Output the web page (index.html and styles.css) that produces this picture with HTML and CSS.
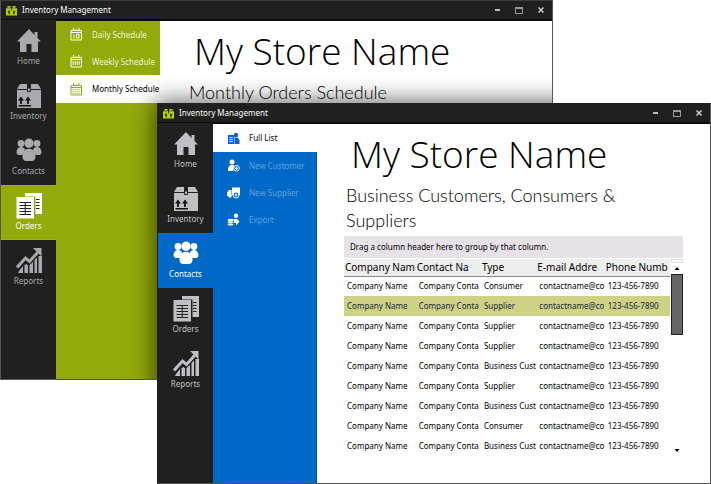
FILE: index.html
```html
<!DOCTYPE html>
<html lang="en">
<head>
<meta charset="utf-8">
<title>Inventory Management</title>
<link rel="stylesheet" href="styles.css">
</head>
<body>
<svg class="defs" aria-hidden="true">
  <symbol id="i-logo" viewBox="0 0 12 12"><path d="M0 3.500h5.500v8H0zM6.500 3.500H12v8H6.500zM5 6h2v5.500H5z" fill="#b4d400"/><path d="M1.500 1H5v2H1.500zM7 1h3.500v2H7z" fill="#b4d400"/><path d="M3.500 6v4M8.500 6v4M2 7.500h1.500M8.500 7.500H10" stroke="#20250a" stroke-width="1.300" fill="none"/></symbol>
  <symbol id="i-home" viewBox="0 0 26 26"><path d="M13 1L1 13.500h3V24h6.500v-8h5v8H22V13.500h3L21.500 10V4H18.500v3z"/></symbol>
  <symbol id="i-inventory" viewBox="0 0 26 26"><path d="M4 1h7v4.500h4V1h7l3 5v19H1V6z"/><path d="M1 6.500h10M15 6.500h10M11.500 1v7.500h3V1" stroke="#222" fill="none"/><path d="M5 15v6M12 15v6" stroke="#111" stroke-width="1.800"/><path d="M2 17.500L5 13.500 8 17.500zM9 17.500l3-4 3 4zM2.500 22h12.500v1.500H2.500z" fill="#111"/></symbol>
  <symbol id="i-contacts" viewBox="0 0 26 26"><circle cx="5" cy="5.500" r="3.400"/><circle cx="21" cy="5.500" r="3.400"/><path d="M.5 15c0-4 2-6 4.500-6 2 0 3.500 1 4 2.500L6.500 17H2zM25.500 15c0-4-2-6-4.500-6-2 0-3.500 1-4 2.500l2.500 5.500H24z"/><path d="M13 10.800c4.500 0 6.500 3.500 6.500 7.700 0 2.500-1 4-3 4.500h-7c-2-.5-3-2-3-4.500 0-4.200 2-7.700 6.500-7.700z"/><circle cx="13" cy="5.300" r="4.700"/></symbol>
  <symbol id="i-orders" viewBox="0 0 26 26"><path d="M9 0h17v21h-6.500V3.500H9z"/><path d="M.5 4H18v21.500H.5z"/><path class="lines" d="M3.500 9.500h11.500M3.500 12.500h11.500M3.500 15.500h11.500M3.500 18.500h11.500M3.500 21.500h11.500M9.200 9v13M20 6.500h3.500M20 9.500h3.500M20 12.500h3.500M20 15.500h3.500" fill="none"/></symbol>
  <symbol id="i-reports" viewBox="0 0 26 26"><path d="M3 23l4-5v7H2zM8.500 17l2-1 1.500 1.500V25H8.500zM13.500 17L17 14v11h-3.500zM18.500 12l2.500-2.500V25h-2.500zM22.500 8H26v17h-3.500z"/><path d="M1 19.500L9.500 10l4 3.500L22 4" fill="none" stroke="currentColor" stroke-width="3"/><path d="M17 0h8.500v8.500z"/></symbol>
  <symbol id="i-cal" viewBox="0 0 13 13"><path d="M1 2.500h10.500V12H1zM1 4.500h10.500M3.500 0v3M9 0v3M6.200 1v1" fill="none" stroke="currentColor"/></symbol>
  <symbol id="i-day" viewBox="0 0 13 13"><use href="#i-cal"/><path d="M4 6.500v4M6.500 6.500h2.500v3.500H6.500z" fill="none" stroke="currentColor"/></symbol>
  <symbol id="i-week" viewBox="0 0 13 13"><use href="#i-cal"/><path d="M2.500 7h8M2.500 9h8" fill="none" stroke="currentColor" stroke-width="1.500" stroke-dasharray="1.300 .8"/></symbol>
  <symbol id="i-month" viewBox="0 0 13 13"><use href="#i-cal"/><path d="M2.500 6.300h8M2.500 8.300h8M2.500 10.300h8" fill="none" stroke="currentColor" stroke-dasharray="1.200 .8"/></symbol>
  <symbol id="i-list" viewBox="0 0 13 13"><path d="M1 3h6.500v9H1z"/><circle cx="9" cy="3" r="2.200"/><path d="M8 5.500h2.500L12.500 8v4H8z"/><path d="M2.300 5.500H6M2.300 7.500H6M2.300 9.500H6" stroke="#fff" stroke-width=".8"/></symbol>
  <symbol id="i-customer" viewBox="0 0 13 13"><circle cx="5" cy="3" r="2.500"/><path d="M1 12c0-4 1-6 4-6 1.500 0 2.500.5 3 1.500L6 12z"/><circle cx="9.500" cy="9.300" r="2.800" fill="#0068c6" stroke="currentColor"/><path d="M9.500 7.800v3M8 9.300h3" stroke="currentColor"/></symbol>
  <symbol id="i-supplier" viewBox="0 0 13 13"><path d="M5 1.500h8V9H5zM0 6.500L2 4h2.500v6H0z"/><circle cx="3" cy="10" r="1.800"/><circle cx="9" cy="9" r="3" fill="#0068c6" stroke="currentColor"/><path d="M9 7.500v3M7.500 9h3" stroke="currentColor"/></symbol>
  <symbol id="i-export" viewBox="0 0 13 13"><circle cx="9" cy="2.800" r="2.200"/><path d="M6.500 6H10l2.500 2.500L9 12.500V10H7z"/><ellipse cx="3.500" cy="7" rx="3" ry="1.200"/><ellipse cx="3.500" cy="9.300" rx="3" ry="1"/><ellipse cx="3.500" cy="11.500" rx="3" ry="1"/></symbol>
</svg>

<section class="window back">
  <header class="titlebar">
    <svg class="logo"><use href="#i-logo"/></svg><span class="caption">Inventory Management</span>
    <button class="ctl min" aria-label="Minimize"></button><button class="ctl max" aria-label="Maximize"></button><button class="ctl close" aria-label="Close"><svg viewBox="0 0 6 6"><path d="M.5.5l5 5M5.500.5l-5 5"/></svg></button>
  </header>
  <div class="body">
    <nav class="nav">
      <a href="#"><svg><use href="#i-home"/></svg>Home</a>
      <a href="#"><svg><use href="#i-inventory"/></svg>Inventory</a>
      <a href="#"><svg><use href="#i-contacts"/></svg>Contacts</a>
      <a href="#" class="on"><svg><use href="#i-orders"/></svg>Orders</a>
      <a href="#"><svg><use href="#i-reports"/></svg>Reports</a>
    </nav>
    <nav class="menu">
      <a href="#"><svg><use href="#i-day"/></svg>Daily Schedule</a>
      <a href="#"><svg><use href="#i-week"/></svg>Weekly Schedule</a>
      <a href="#" class="on"><svg><use href="#i-month"/></svg>Monthly Schedule</a>
    </nav>
    <main class="content">
      <h1>My Store Name</h1>
      <h2>Monthly Orders Schedule</h2>
    </main>
  </div>
</section>

<section class="window front">
  <header class="titlebar">
    <svg class="logo"><use href="#i-logo"/></svg><span class="caption">Inventory Management</span>
    <button class="ctl min" aria-label="Minimize"></button><button class="ctl max" aria-label="Maximize"></button><button class="ctl close" aria-label="Close"><svg viewBox="0 0 6 6"><path d="M.5.5l5 5M5.500.5l-5 5"/></svg></button>
  </header>
  <div class="body">
    <nav class="nav">
      <a href="#"><svg><use href="#i-home"/></svg>Home</a>
      <a href="#"><svg><use href="#i-inventory"/></svg>Inventory</a>
      <a href="#" class="on"><svg><use href="#i-contacts"/></svg>Contacts</a>
      <a href="#"><svg><use href="#i-orders"/></svg>Orders</a>
      <a href="#"><svg><use href="#i-reports"/></svg>Reports</a>
    </nav>
    <nav class="menu">
      <a href="#" class="on"><svg><use href="#i-list"/></svg>Full List</a>
      <a href="#"><svg><use href="#i-customer"/></svg>New Customer</a>
      <a href="#"><svg><use href="#i-supplier"/></svg>New Supplier</a>
      <a href="#"><svg><use href="#i-export"/></svg>Export</a>
    </nav>
    <main class="content">
      <h1>My Store Name</h1>
      <h2>Business Customers, Consumers &amp; Suppliers</h2>
      <p class="groupbar">Drag a column header here to group by that column.</p>
      <div class="grid">
        <table>
          <colgroup><col class="c1"><col class="c2"><col class="c3"><col class="c4"><col class="c5"></colgroup>
          <thead><tr><th>Company Nam</th><th>Contact Na</th><th>Type</th><th>E-mail Addre</th><th>Phone Numb</th></tr></thead>
          <tbody>
            <tr><td>Company Name</td><td>Company Conta</td><td>Consumer</td><td>contactname@co</td><td>123-456-7890</td></tr>
            <tr class="sel"><td>Company Name</td><td>Company Conta</td><td>Supplier</td><td>contactname@co</td><td>123-456-7890</td></tr>
            <tr><td>Company Name</td><td>Company Conta</td><td>Supplier</td><td>contactname@co</td><td>123-456-7890</td></tr>
            <tr><td>Company Name</td><td>Company Conta</td><td>Supplier</td><td>contactname@co</td><td>123-456-7890</td></tr>
            <tr><td>Company Name</td><td>Company Conta</td><td>Business Cust</td><td>contactname@co</td><td>123-456-7890</td></tr>
            <tr><td>Company Name</td><td>Company Conta</td><td>Supplier</td><td>contactname@co</td><td>123-456-7890</td></tr>
            <tr><td>Company Name</td><td>Company Conta</td><td>Business Cust</td><td>contactname@co</td><td>123-456-7890</td></tr>
            <tr><td>Company Name</td><td>Company Conta</td><td>Consumer</td><td>contactname@co</td><td>123-456-7890</td></tr>
            <tr><td>Company Name</td><td>Company Conta</td><td>Business Cust</td><td>contactname@co</td><td>123-456-7890</td></tr>
          </tbody>
        </table>
        <div class="scroll">
          <span class="split"></span>
          <button class="up" aria-label="Scroll up"></button>
          <span class="thumb"></span>
          <button class="down" aria-label="Scroll down"></button>
        </div>
      </div>
    </main>
  </div>
</section>
</body>
</html>
```
FILE: styles.css
```css
* { box-sizing: border-box; }
body {
  margin: 0;
  height: 100vh;
  position: relative;
  overflow: hidden;
  background: #fff;
  font: 8px/14px "Noto Sans", sans-serif;
  color: #000;
}
.defs { position: absolute; width: 0; height: 0; }
a { text-decoration: none; color: inherit; }
button { border: 0; padding: 0; background: none; }
svg { fill: currentColor; flex: none; display: block; }

.window {
  position: absolute;
  display: flex;
  flex-direction: column;
  background: #fff;
  border: 1px solid #555;
  border-top-color: #3c3f3e;
  overflow: hidden;
}
.back { left: 0; top: 0; right: 158px; bottom: 104px; --accent: #94a90a; --edge: #9db50a; }
.front { left: 157px; top: 103px; right: 0; bottom: 0; --accent: #0068c6; --edge: #0068f0; border-left-color: #222; border-top-color: #222; }
/* Shadow cast by the front window, kept inside the back one */
.back::after {
  content: "";
  position: absolute;
  left: 156px;
  top: 102px;
  width: 100%;
  height: 100%;
  box-shadow: 0 0 22px 2px rgba(0, 0, 0, .6);
}

.titlebar {
  display: flex;
  align-items: center;
  height: 20px;
  flex: none;
  padding: 0 8px 0 5px;
  background: #202020;
  border-bottom: 2px solid #0c0c0c;
  color: #fff;
}
.logo { width: 11px; height: 11px; }
.caption { flex: 1; padding-left: 5px; }
.ctl { width: 8px; height: 8px; margin-left: 15px; color: #bbb; }
.min { width: 5px; height: 2px; background: #bbb; }
.max { border: 1px solid #999; border-top-width: 2px; height: 7px; }
.close { width: 6px; height: 6px; }
.close svg { width: 6px; height: 6px; stroke: #ccc; stroke-width: 1.500; }

.body { display: flex; flex: 1; min-height: 0; }
.nav { width: 55px; flex: none; margin-top: -1px; background: #202020; color: #a9a9ae; }
.nav a { display: flex; flex-direction: column; align-items: center; height: 55px; padding-top: 8px; }
.nav svg { width: 26px; height: 26px; }
.nav .on { background: var(--accent); color: #fff; border: solid var(--edge); border-width: 1px 0; padding-top: 7px; }
.lines { stroke: #202020; stroke-width: 1; }
.back .lines { stroke: #94a90a; }
.front .nav { color: #c0c0c4; }
.front .nav .on { color: #fff; }

.menu { width: 104px; flex: none; background: var(--accent); color: #f2f5dc; }
.menu a { display: flex; align-items: center; gap: 9px; height: 27px; padding-left: 14px; white-space: nowrap; }
.menu svg { width: 13px; height: 13px; color: #fff; }
.menu .on { background: #fff; color: #000; height: 28px; }
.menu .on svg { color: var(--accent); }
.front .menu { color: #5fa3e0; border: solid #0048d0; border-width: 0 1px 0 0; }
.front .menu .on { color: #000; margin-right: -1px; }

.content { flex: 1; min-width: 0; padding: 4px 27px 0; }
h1, h2 { margin: 0; font-weight: 300; }
h1 { font-family: "Open Sans", sans-serif; font-size: 37px; line-height: 52px; padding-left: 7px; white-space: nowrap; }
h2 { font-family: Lato, sans-serif; font-size: 18px; line-height: 25px; margin-top: 3px; padding-left: 2px; }

.groupbar { margin: 3px 0 0; padding: 4px 6px; background: #e7e2e7; }
.grid { display: flex; gap: 1px; padding-top: 1px; }
table { flex: 1; min-width: 0; width: 100%; table-layout: fixed; border-collapse: collapse; }
.c1 { width: 22%; }
.c2 { width: 20%; }
.c3 { width: 17%; }
.c4 { width: 21%; }
.c5 { width: 20%; }
th, td { text-align: left; white-space: nowrap; overflow: hidden; }
th { height: 17px; padding: 0 0 0 1px; background: #eee; border-bottom: 1px solid #888; font-size: 10px; font-weight: 400; }
td { height: 20px; padding: 0 0 0 3px; }
.sel { background: #cdd284; color: #1c2440; }
.scroll { display: flex; flex-direction: column; align-items: center; width: 12px; flex: none; }
.split { width: 12px; height: 4px; border: 1px solid #ddd; margin-bottom: 4px; }
.up, .down { width: 5px; height: 3px; background: #000; clip-path: polygon(50% 0, 100% 100%, 0 100%); }
.thumb { width: 12px; height: 61px; margin-top: 4px; background: #666; border: 1px solid #222; }
.down { margin-top: auto; margin-bottom: 4px; clip-path: polygon(0 0, 100% 0, 50% 100%); }
```
